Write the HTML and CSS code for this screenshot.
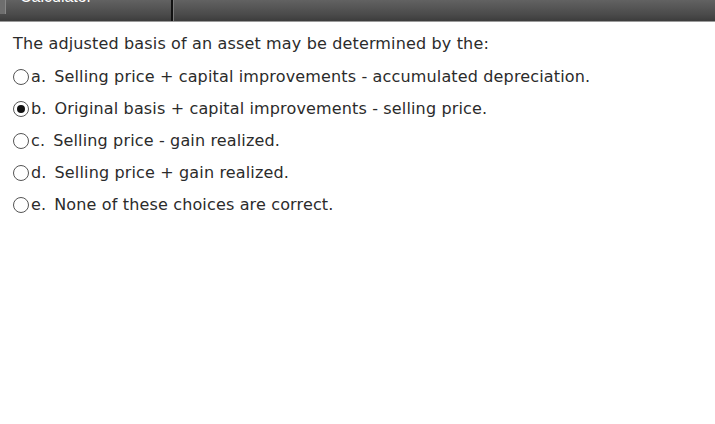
FILE: index.html
```html
<!DOCTYPE html>
<html>
<head>
<meta charset="utf-8">
<link rel="stylesheet" href="styles.css">
</head>
<body>
<div class="topbar">
  <div class="tab"><span class="icon"></span><span class="tab-label">Calculator</span></div>
  <div class="rest"></div>
</div>
<div class="content">
  <div class="question">The adjusted basis of an asset may be determined by the:</div>
  <div class="options">
    <label class="opt"><span class="radio"></span><span class="letter">a.</span><span class="txt">Selling price + capital improvements - accumulated depreciation.</span></label>
    <label class="opt"><span class="radio checked"></span><span class="letter">b.</span><span class="txt">Original basis + capital improvements - selling price.</span></label>
    <label class="opt"><span class="radio"></span><span class="letter">c.</span><span class="txt">Selling price - gain realized.</span></label>
    <label class="opt"><span class="radio"></span><span class="letter">d.</span><span class="txt">Selling price + gain realized.</span></label>
    <label class="opt"><span class="radio"></span><span class="letter">e.</span><span class="txt">None of these choices are correct.</span></label>
  </div>
</div>
</body>
</html>
```
FILE: styles.css
```css
html, body { margin: 0; padding: 0; background: #fff; }
body { font-family: "DejaVu Sans", Verdana, sans-serif; color: #2b2b2b; }
.topbar {
  display: flex;
  height: 21px;
  background: linear-gradient(#626262, #4a4a4a 70%, #3c3c3c);
  border-bottom: 1px solid #9a9a9a;
  overflow: hidden;
}
.tab {
  width: 171px;
  border-right: 2px solid #111;
  display: flex;
  align-items: flex-start;
}
.icon {
  width: 5px; height: 14px;
  background: #6e6e6e;
  border-right: 1px solid #888;
  flex: none;
}
.tab-label {
  color: #fff;
  font-family: "Liberation Sans", Arial, sans-serif;
  font-size: 16px;
  margin-left: 14px;
  margin-top: -12px;
  line-height: 18px;
}
.rest { flex: 1; border-left: 1px solid #7a7a7a; }
.content { padding: 12px 0 0 13px; }
.question { font-size: 16px; line-height: 20px; margin-bottom: 13px; letter-spacing: 0.15px; }
.options { display: flex; flex-direction: column; gap: 12px; }
.opt { display: flex; align-items: center; font-size: 16px; line-height: 20px; letter-spacing: 0.15px; }
.radio {
  width: 16px; height: 16px;
  border: 1px solid #555;
  border-radius: 50%;
  box-sizing: border-box;
  margin-right: 2px;
  position: relative;
  flex: none;
}
.radio.checked::after {
  content: "";
  position: absolute;
  left: 3px; top: 3px;
  width: 8px; height: 8px;
  border-radius: 50%;
  background: #111;
}
.letter { margin-right: 8px; }
```
